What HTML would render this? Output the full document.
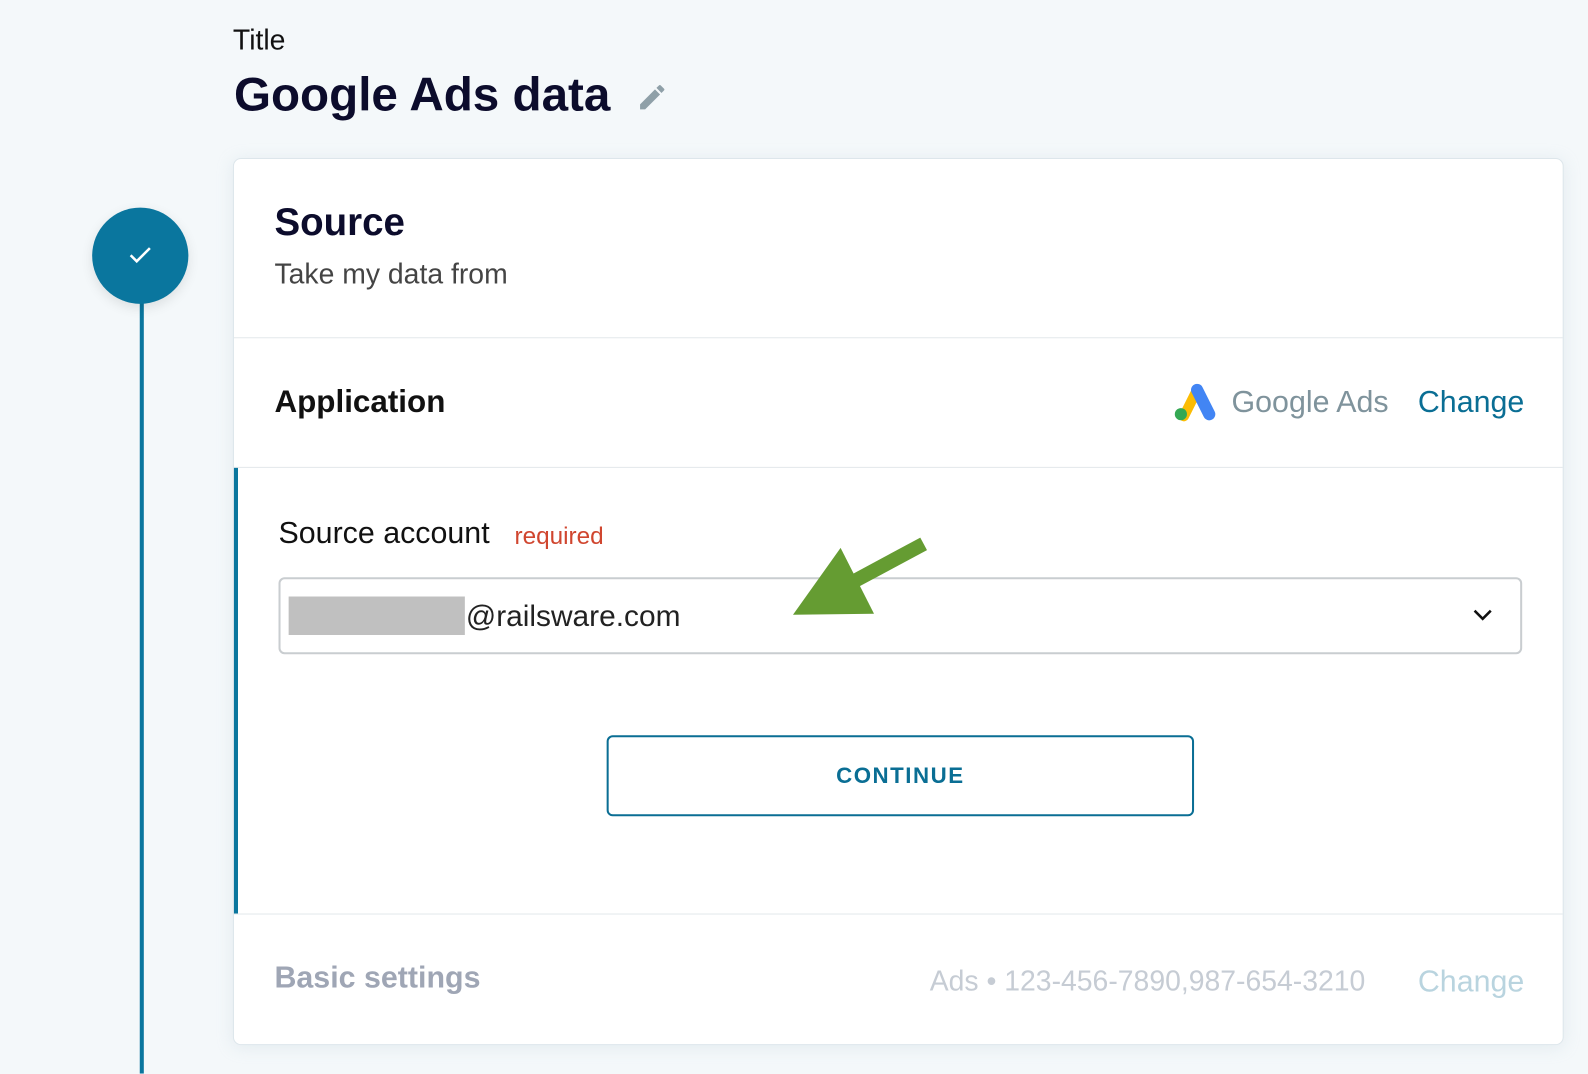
<!DOCTYPE html>
<html><head><meta charset="utf-8"><style>
*{box-sizing:border-box;margin:0;padding:0}
body{width:1588px;height:1060px;background:#f4f8fa;font-family:"Liberation Sans",sans-serif;overflow:hidden;color:#0c0c2c}
#w{position:relative;width:1568px;height:1047px;transform:scale(1.01276);transform-origin:0 0}
.abs{position:absolute}
.card{position:absolute;left:230px;top:156px;width:1314px;height:876px;background:#fff;border:1px solid #dde6eb;border-radius:8px;box-shadow:0 2px 16px rgba(180,200,210,.25)}
.sep{position:absolute;left:0;right:0;height:1px;background:#e3e8eb}
</style></head><body><div id="w">
<div class="abs" style="left:230px;top:24px;font-size:28px;color:#111">Title</div>
<div class="abs" style="left:231px;top:65px;font-size:47px;font-weight:bold;color:#0c0c2c">Google Ads data</div>
<svg class="abs" style="left:628px;top:80px" width="32" height="32" viewBox="0 0 24 24"><path d="M3 17.25V21h3.75L17.8 9.94l-3.75-3.75L3 17.25zM20.7 7.04a1 1 0 000-1.41l-2.34-2.34a1 1 0 00-1.41 0l-1.83 1.83 3.75 3.75 1.83-1.83z" fill="#8fa0a8"/></svg>
<div class="abs" style="left:138px;top:290px;width:4px;height:770px;background:#0a769e"></div>
<div class="abs" style="left:91px;top:205px;width:95px;height:95px;border-radius:50%;background:#0a769e;box-shadow:0 4px 12px rgba(0,0,0,.1)"></div>
<svg class="abs" style="left:126px;top:240px" width="26" height="24" viewBox="0 0 26 24"><path d="M3 12l6 6L22 5" stroke="#fff" stroke-width="2.5" fill="none"/></svg>
<div class="card">
<div class="abs" style="left:40px;top:42px;font-size:38px;font-weight:bold">Source</div>
<div class="abs" style="left:40px;top:98px;font-size:28px;color:#444">Take my data from</div>
<div class="sep" style="top:176px"></div>
<div class="abs" style="left:40px;top:222px;font-size:31px;font-weight:bold;color:#111">Application</div>
<svg class="abs" style="left:926px;top:221px" width="44" height="40" viewBox="0 0 44 40"><path d="M12 33L24 9" stroke="#fbbc04" stroke-width="10" stroke-linecap="round"/><path d="M25 7L37 31" stroke="#4285f4" stroke-width="12" stroke-linecap="round"/><circle cx="9" cy="31" r="6" fill="#34a853"/></svg>
<div class="abs" style="left:985px;top:224px;font-size:30px;color:#7f939c">Google Ads</div>
<div class="abs" style="left:1169px;top:224px;font-size:30px;color:#0a6e94">Change</div>
<div class="sep" style="top:304px"></div>
<div class="abs" style="left:0;top:305px;width:4px;height:440px;background:#0a769e"></div>
<div class="abs" style="left:44px;top:353px;font-size:30px;color:#111">Source account</div>
<div class="abs" style="left:277px;top:359px;font-size:24px;color:#d0462f">required</div>
<div class="abs" style="left:44px;top:413px;width:1228px;height:76px;border:2px solid #c9cdd0;border-radius:6px"></div>
<div class="abs" style="left:54px;top:432px;width:174px;height:38px;background:#c0c0c0"></div>
<div class="abs" style="left:229px;top:435px;font-size:29.5px;color:#222">@railsware.com</div>
<svg class="abs" style="left:1222px;top:442px" width="22" height="16" viewBox="0 0 22 16"><path d="M3 4l8 8 8-8" stroke="#111" stroke-width="2.5" fill="none"/></svg>
<svg class="abs" style="left:540px;top:370px" width="150" height="90" viewBox="540 370 150 90"><path d="M681 380L614 416" stroke="#659c32" stroke-width="14"/><polygon points="599,384 632,449 552,450" fill="#659c32"/></svg>
<div class="abs" style="left:368px;top:569px;width:580px;height:80px;border:2px solid #0a6e94;border-radius:6px;text-align:center;line-height:76px;font-size:22px;font-weight:bold;letter-spacing:1.5px;color:#0a6e94">CONTINUE</div>
<div class="sep" style="top:745px"></div>
<div class="abs" style="left:40px;top:792px;font-size:30px;font-weight:bold;color:#9fa6b5">Basic settings</div>
<div class="abs" style="left:687px;top:796px;font-size:28px;color:#c6ccd4">Ads • 123-456-7890,987-654-3210</div>
<div class="abs" style="left:1169px;top:796px;font-size:30px;color:#b9d4df">Change</div>
</div>
</div></body></html>
